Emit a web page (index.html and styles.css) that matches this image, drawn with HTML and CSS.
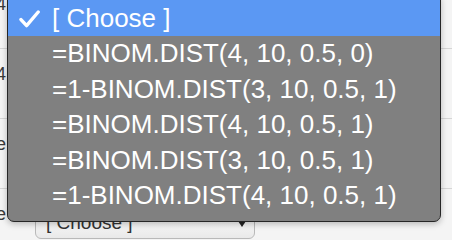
FILE: index.html
```html
<!DOCTYPE html>
<html>
<head>
<meta charset="utf-8">
<link rel="stylesheet" href="styles.css">
</head>
<body>
<div class="page">
  <div class="row"><span class="label">4</span></div>
  <div class="row"><span class="label">4</span></div>
  <div class="row"><span class="label">e</span></div>
  <div class="row last">
    <span class="label">e</span>
    <div class="select"><span class="select-text">[ Choose ]</span><span class="arrow"></span></div>
  </div>
</div>

<div class="menu">
  <div class="item selected">
    <span class="check"><svg width="21" height="18" viewBox="0 0 21 18"><path d="M2 9.6 L7.6 15.6 L19.2 2" fill="none" stroke="#fff" stroke-width="3.4" stroke-linecap="round" stroke-linejoin="round"/></svg></span>
    <span class="text">[ Choose ]</span>
  </div>
  <div class="item"><span class="check"></span><span class="text">=BINOM.DIST(4, 10, 0.5, 0)</span></div>
  <div class="item"><span class="check"></span><span class="text">=1-BINOM.DIST(3, 10, 0.5, 1)</span></div>
  <div class="item"><span class="check"></span><span class="text">=BINOM.DIST(4, 10, 0.5, 1)</span></div>
  <div class="item"><span class="check"></span><span class="text">=BINOM.DIST(3, 10, 0.5, 1)</span></div>
  <div class="item"><span class="check"></span><span class="text">=1-BINOM.DIST(4, 10, 0.5, 1)</span></div>
</div>
</body>
</html>
```

FILE: styles.css
```css
html, body {
  margin: 0;
  padding: 0;
}
body {
  width: 452px;
  height: 240px;
  overflow: hidden;
  position: relative;
  background: #f4f4f4;
  font-family: "Liberation Sans", Arial, sans-serif;
}
.page {
  margin-top: -21px;
}
.row {
  height: 69px;
  border-bottom: 1px solid #d6d6d6;
  display: flex;
  align-items: flex-start;
}
.row.last {
  height: 51px;
  border-bottom: none;
}
.label {
  margin-left: -4px;
  margin-top: 15px;
  font-size: 18px;
  line-height: 20px;
  color: #3a3a3a;
}
.select {
  margin-left: 29px;
  margin-top: 22px;
  width: 200px;
  height: 26px;
  border: 1px solid #b9b9b9;
  border-radius: 6px;
  background: linear-gradient(#ffffff, #e9e9e9);
  display: flex;
  align-items: center;
  justify-content: space-between;
  padding: 0 8px 0 10px;
}
.select-text {
  font-size: 19px;
  color: #333;
  margin-top: -4px;
}
.arrow {
  width: 0;
  height: 0;
  border-left: 4px solid transparent;
  border-right: 4px solid transparent;
  border-top: 6px solid #222;
  margin-top: -2px;
}
.menu {
  position: absolute;
  left: 7px;
  top: -7px;
  width: 432px;
  padding: 6px 0 7.5px 0;
  background: #808080;
  border: 1px solid #262626;
  border-radius: 7px;
  box-shadow: 0 2px 6px rgba(0, 0, 0, 0.25);
}
.item {
  height: 35.5px;
  display: flex;
  align-items: center;
  color: #ffffff;
  font-size: 26px;
  line-height: 35.5px;
  white-space: nowrap;
}
.item.selected {
  height: 36px;
  line-height: 36px;
  background: #5b98f3;
}
.check {
  width: 44px;
  flex: none;
  display: flex;
  align-items: center;
}
.check svg {
  margin-left: 11px;
  margin-top: 1px;
}
.text {
  display: block;
}
```
